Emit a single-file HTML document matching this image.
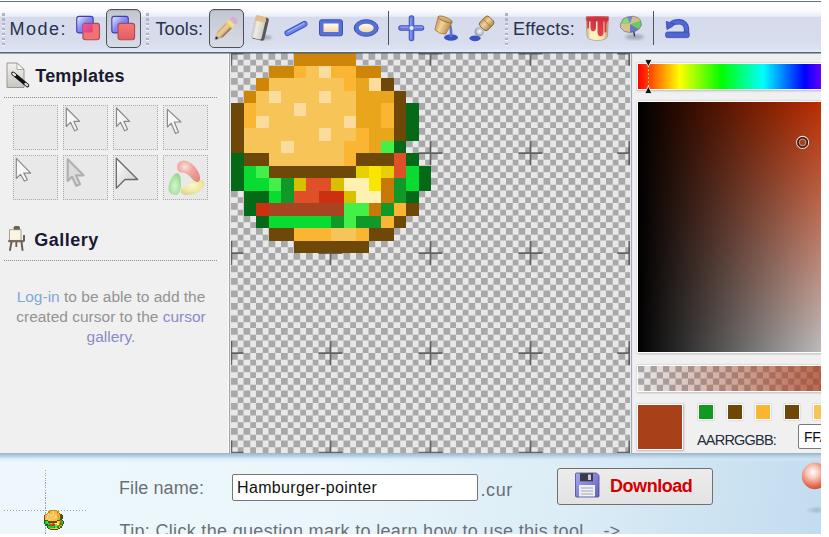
<!DOCTYPE html>
<html><head><meta charset="utf-8">
<style>
html,body{margin:0;padding:0;background:#fff;width:829px;height:537px;overflow:hidden}
body{position:relative;font-family:"Liberation Sans",sans-serif}
.a{position:absolute}
#clip{position:absolute;left:0;top:0;width:821px;height:534px;overflow:hidden;background:#fff}
#tb{left:0;top:1px;width:821px;height:52px;box-sizing:border-box;border-top:1px solid #64747f;border-bottom:1px solid #52667a;
background:linear-gradient(to bottom,#ffffff 0px,#fcfcfe 8px,#eff1f8 13px,#e6e9f4 14.5px,#d5daec 15px,#d8ddee 40px,#dde2f1 47px,#e8edf7 50px)}
.grip{width:3px;height:35px;background:repeating-linear-gradient(to bottom,#b0b4c0 0,#b0b4c0 2.5px,rgba(255,255,255,.8) 2.5px,rgba(255,255,255,.8) 3px,transparent 3px,transparent 5px)}
.lbl{font-size:18px;line-height:18px;color:#28324c;white-space:nowrap}
.btn{box-sizing:border-box;border:1.3px solid #4e5258;border-radius:5px;background:linear-gradient(#c2c6d0,#d8dce6);box-shadow:inset 0 1px 1px rgba(0,0,0,.1)}
.sep{width:1px;background:#4c5560}
#lp{left:0;top:53px;width:228px;height:400px;background:#f0f0f0}
.h{font-size:18px;font-weight:bold;line-height:18px;color:#1a1a33}
.dots{height:1px;background:repeating-linear-gradient(to right,#8c8c8c 0,#8c8c8c 1px,transparent 1px,transparent 2px)}
.cell{width:45px;height:45px;box-sizing:border-box;background:#e9e9e9;
background-image:repeating-linear-gradient(to right,#a9a9a9 0 1px,transparent 1px 2px),repeating-linear-gradient(to right,#a9a9a9 0 1px,transparent 1px 2px),repeating-linear-gradient(to bottom,#a9a9a9 0 1px,transparent 1px 2px),repeating-linear-gradient(to bottom,#a9a9a9 0 1px,transparent 1px 2px);
background-size:100% 1px,100% 1px,1px 100%,1px 100%;background-position:0 0,0 100%,0 0,100% 0;background-repeat:no-repeat}
.chk{background-color:#e7e7e7;background-image:conic-gradient(#e7e7e7 25%,#a8a8a8 0 50%,#e7e7e7 0 75%,#a8a8a8 0);background-size:12.5px 12.5px}
#rp{left:633px;top:53px;width:200px;height:400px;background:#f0f0f0}
#bp{left:0;top:453px;width:821px;height:81px;
background:linear-gradient(to bottom,#9ab2c4 0px,#a8c2d6 1.5px,#bcd4e6 3.5px,rgba(210,232,246,.5) 6px,rgba(220,238,248,0) 10px),linear-gradient(100deg,#eef8fc 0%,#eaf6fb 40%,#dcedf6 68%,#c2dcef 100%)}
</style></head><body>
<div id="clip">
<!-- TOOLBAR -->
<div id="tb" class="a">
</div>
<div class="a grip" style="left:2px;top:13px"></div>
<div class="a lbl" style="left:9.6px;top:19.8px;letter-spacing:1.5px">Mode:</div>
<!-- mode icon 1 -->
<svg class="a" style="left:72px;top:12px" width="32" height="32" viewBox="0 0 32 32">
 <defs>
  <linearGradient id="gb" x1="0" y1="0" x2="1" y2="1"><stop offset="0" stop-color="#eef0ff"/><stop offset=".45" stop-color="#8a8ef4"/><stop offset="1" stop-color="#5a5ce6"/></linearGradient>
  <linearGradient id="gr2" x1="0" y1="0" x2="0" y2="1"><stop offset="0" stop-color="#f27a7a"/><stop offset="1" stop-color="#e65c5c"/></linearGradient>
  <linearGradient id="gm" x1="0" y1="0" x2="1" y2="1"><stop offset="0" stop-color="#e85a9a"/><stop offset="1" stop-color="#e0407e"/></linearGradient>
 </defs>
 <rect x="4.7" y="4.4" width="16.5" height="16.5" rx="2.5" fill="url(#gb)" stroke="#3e40a8" stroke-width="1.1"/>
 <rect x="10.9" y="11.4" width="16.6" height="16.3" rx="2.5" fill="#f07272" stroke="#a84c5a" stroke-width="1.1"/>
 <rect x="11.4" y="11.9" width="9.3" height="8.5" rx="1.2" fill="url(#gm)"/>
</svg>
<div class="a btn" style="left:106px;top:9px;width:35px;height:39px"></div>
<svg class="a" style="left:107px;top:12px" width="32" height="32" viewBox="0 0 32 32">
 <rect x="4.8" y="4.4" width="16.5" height="16.5" rx="2.5" fill="url(#gb)" stroke="#3e40a8" stroke-width="1.1"/>
 <rect x="11" y="11.4" width="16.6" height="16.3" rx="2.5" fill="url(#gr2)" stroke="#a84c5a" stroke-width="1.1"/>
</svg>
<div class="a grip" style="left:146px;top:13px"></div>
<div class="a lbl" style="left:155.5px;top:19.8px;letter-spacing:.1px">Tools:</div>
<div class="a btn" style="left:209px;top:9px;width:35px;height:39px"></div>
<!-- pencil -->
<svg class="a" style="left:210px;top:12px" width="32" height="32" viewBox="0 0 32 32">
 <defs><linearGradient id="gpen" x1="0" y1="0" x2="0" y2="1"><stop offset="0" stop-color="#c8a070"/><stop offset=".35" stop-color="#f0d0a0"/><stop offset=".75" stop-color="#d8b080"/><stop offset="1" stop-color="#6a5030"/></linearGradient>
 <linearGradient id="gpy" x1="0" y1="0" x2="1" y2="0"><stop offset="0" stop-color="#e0cc80"/><stop offset=".5" stop-color="#f2ee60"/><stop offset="1" stop-color="#e4d8a0"/></linearGradient>
 <filter id="pbl"><feGaussianBlur stdDeviation=".35"/></filter></defs>
 <g transform="translate(5 27.6) rotate(-45.5)" filter="url(#pbl)">
  <path d="M0 0 L7.5 -3.9 H21 V3.9 H7.5 Z" fill="url(#gpen)"/>
  <path d="M0 0 L3.3 -1.7 V1.7 Z" fill="#111"/>
  <path d="M19.5 -3.9 H25 V3.9 H19.5 Z" fill="url(#gpy)"/>
  <path d="M24.5 -3.9 H27.5 Q30 -3.5 30 0 Q30 3.5 27.5 3.9 H24.5 Z" fill="#dcaad8"/>
 </g>
</svg>
<!-- eraser -->
<svg class="a" style="left:246px;top:12px" width="32" height="32" viewBox="0 0 32 32">
 <defs><linearGradient id="ge" x1="0" y1="0" x2="1" y2="0"><stop offset="0" stop-color="#c8c6c0"/><stop offset=".3" stop-color="#eeece6"/><stop offset="1" stop-color="#d0cec8"/></linearGradient>
 <filter id="esh"><feGaussianBlur stdDeviation="1.2"/></filter></defs>
 <ellipse cx="20" cy="25.5" rx="6" ry="2.2" fill="#556" opacity=".35" filter="url(#esh)"/>
 <g transform="rotate(13 13 16)">
  <rect x="7.8" y="4.2" width="13" height="23.5" rx="2.2" fill="#585858"/>
  <rect x="7.3" y="4" width="10.5" height="23" rx="1.8" fill="url(#ge)"/>
  <path d="M9.1 4 H16 Q17.8 4 17.8 5.8 V9.5 H7.3 V5.8 Q7.3 4 9.1 4 Z" fill="#e4bc88"/>
 </g>
</svg>
<!-- line -->
<svg class="a" style="left:280px;top:12px" width="32" height="32" viewBox="0 0 32 32">
 <line x1="7.5" y1="21" x2="24.5" y2="12" stroke="#3f55b8" stroke-width="6" stroke-linecap="round"/>
 <line x1="7.5" y1="21" x2="24.5" y2="12" stroke="#6a86ee" stroke-width="4" stroke-linecap="round"/>
 <line x1="8" y1="19.8" x2="24" y2="11.3" stroke="#9db2ff" stroke-width="1.2" stroke-linecap="round"/>
</svg>
<!-- rect -->
<svg class="a" style="left:315px;top:12px" width="32" height="32" viewBox="0 0 32 32">
 <defs><linearGradient id="gc" x1="0" y1="0" x2="0" y2="1"><stop offset="0" stop-color="#fffaf0"/><stop offset="1" stop-color="#f0d8a8"/></linearGradient></defs>
 <rect x="4.5" y="7.8" width="23" height="16" rx="2" fill="#5670d8" stroke="#3c50b0" stroke-width="1"/>
 <rect x="8.5" y="11.5" width="15" height="8.5" fill="url(#gc)"/>
</svg>
<!-- ellipse -->
<svg class="a" style="left:350px;top:12px" width="32" height="32" viewBox="0 0 32 32">
 <ellipse cx="16.2" cy="16" rx="12" ry="8.3" fill="#5670d8" stroke="#3c50b0" stroke-width="1"/>
 <ellipse cx="16.2" cy="16" rx="7.5" ry="4.2" fill="url(#gc)"/>
</svg>
<div class="a sep" style="left:388px;top:11px;height:34px"></div>
<!-- move cross -->
<svg class="a" style="left:396px;top:12px" width="32" height="32" viewBox="0 0 32 32">
 <g stroke="#3c50b0" stroke-width="5.5" stroke-linecap="round"><line x1="5" y1="16" x2="25.5" y2="16"/><line x1="15.5" y1="6" x2="15.5" y2="26.5"/></g>
 <g stroke="#6078e0" stroke-width="3.8" stroke-linecap="round"><line x1="5" y1="16" x2="25.5" y2="16"/><line x1="15.5" y1="6" x2="15.5" y2="26.5"/></g>
 <g stroke="#98acf8" stroke-width="1" stroke-linecap="round"><line x1="5" y1="15.2" x2="12" y2="15.2"/><line x1="19" y1="15.2" x2="27" y2="15.2"/><line x1="14.8" y1="6" x2="14.8" y2="13"/><line x1="14.8" y1="19" x2="14.8" y2="27"/></g>
 <circle cx="15.5" cy="16" r="2" fill="#e8ecff"/>
</svg>
<!-- bucket -->
<svg class="a" style="left:430px;top:12px" width="32" height="32" viewBox="0 0 32 32">
 <defs><linearGradient id="gk" x1="0" y1="0" x2="1" y2="0"><stop offset="0" stop-color="#c89a58"/><stop offset=".4" stop-color="#f2d49a"/><stop offset="1" stop-color="#b88a48"/></linearGradient>
 <linearGradient id="gk2" x1="0" y1="0" x2="1" y2="1"><stop offset="0" stop-color="#e8c888"/><stop offset="1" stop-color="#c09050"/></linearGradient></defs>
 <ellipse cx="21" cy="25.5" rx="7" ry="3.3" fill="#3c54c0"/>
 <path d="M19.5 12 Q21.5 16 21 25" stroke="#5a74d0" stroke-width="2.6" fill="none"/>
 <g transform="rotate(22 13 13)">
  <path d="M5.5 7 L20.5 7 L18.8 20.5 Q13 23 7.2 20.5 Z" fill="url(#gk)" stroke="#9a7440" stroke-width=".7"/>
  <ellipse cx="13" cy="7" rx="7.5" ry="2.2" fill="url(#gk2)" stroke="#8a6430" stroke-width=".7"/>
 </g>
</svg>
<!-- dropper -->
<svg class="a" style="left:464px;top:12px" width="32" height="32" viewBox="0 0 32 32">
 <defs><radialGradient id="gs" cx=".55" cy=".45" r=".7"><stop offset="0" stop-color="#ffffff"/><stop offset=".45" stop-color="#c0c4d0"/><stop offset="1" stop-color="#6a7080"/></radialGradient></defs>
 <ellipse cx="11" cy="26.3" rx="5.6" ry="2.9" fill="#3c54c0"/>
 <circle cx="15.2" cy="19.8" r="4.6" fill="url(#gs)"/>
 <g transform="rotate(45 23 11)"><rect x="17.5" y="5" width="11" height="13" rx="3" fill="url(#gk)" stroke="#7a5a30" stroke-width=".8"/>
 <line x1="17.8" y1="11" x2="28.2" y2="11" stroke="#8a6a40" stroke-width="1" opacity=".6"/></g>
</svg>
<div class="a grip" style="left:505px;top:13px"></div>
<div class="a lbl" style="left:513px;top:19.8px;letter-spacing:.3px">Effects:</div>
<!-- drip cup -->
<svg class="a" style="left:581px;top:12px" width="32" height="32" viewBox="0 0 32 32">
 <defs><linearGradient id="gy" x1="0" y1="0" x2="1" y2="0"><stop offset="0" stop-color="#c8b088"/><stop offset=".2" stop-color="#fff2c0"/><stop offset=".7" stop-color="#fff0b8"/><stop offset="1" stop-color="#b8a078"/></linearGradient>
 <linearGradient id="gd" x1="0" y1="0" x2="0" y2="1"><stop offset="0" stop-color="#c83040"/><stop offset="1" stop-color="#e84050"/></linearGradient></defs>
 <path d="M5.2 5 H27.5 L26.5 24 Q26 28.3 16.3 28.5 Q6.5 28.3 6 24 Z" fill="url(#gy)" stroke="#a89878" stroke-width=".7"/>
 <path d="M5.2 4.5 Q16 3.5 27.5 4.5 V8.5 Q26 9 25.5 12 V20 Q24.5 21 23.5 20 V9.5 H22.5 V21 Q22 24.5 19.5 24.3 Q16.5 24 16.5 20 V9.5 H15 V16 Q14.5 19.5 12 19.3 Q9.5 19 9.5 15.5 V9.5 H8 V16 Q7 17 6.2 16 V9 Q5.2 8.5 5.2 8 Z" fill="url(#gd)"/>
 <path d="M5.5 5 Q16 4 27.2 5" stroke="#f08080" stroke-width="1" fill="none" opacity=".6"/>
</svg>
<!-- umbrella -->
<svg class="a" style="left:615px;top:12px" width="32" height="32" viewBox="0 0 32 32">
 <defs><filter id="ush"><feGaussianBlur stdDeviation="1.5"/></filter></defs>
 <ellipse cx="19.5" cy="25" rx="9.5" ry="2.8" fill="#404860" opacity=".35" filter="url(#ush)"/>
 <line x1="18.6" y1="18.5" x2="19.6" y2="24.3" stroke="#3a3a3a" stroke-width="1.4"/>
<g stroke="none">
  <path d="M15 12 L5.5 12 L8 7 L12 5 Z" fill="#88d878"/>
  <path d="M15 12 L12 5 L18 4.2 Z" fill="#7a88c8"/>
  <path d="M15 12 L18 4.2 L23 5.5 L25.5 8.5 Z" fill="#d4bc8a"/>
  <path d="M15 12 L25.5 8.5 L26.5 13 L24 17 Z" fill="#6ccc5c"/>
  <path d="M15 12 L24 17 L19.5 19.8 L15 20.5 Z" fill="#6a78c0"/>
  <path d="M15 12 L15 20.5 L9.5 19.5 L5.5 15.5 L5.5 12 Z" fill="#dcc28a"/>
 </g>
 <path d="M5.5 12 L8 7 L12 5 L18 4.2 L23 5.5 L25.5 8.5 L26.5 13 L24 17 L19.5 19.8 L15 20.5 L9.5 19.5 L5.5 15.5 Z" fill="none" stroke="#5a5a60" stroke-width=".7" stroke-linejoin="round" opacity=".8"/>
</svg>
<div class="a sep" style="left:653px;top:11px;height:34px"></div>
<!-- undo -->
<svg class="a" style="left:661px;top:12px" width="32" height="32" viewBox="0 0 32 32">
 <path d="M10.5 11.5 Q13.5 9.8 18.5 9.8 A7 7 0 0 1 25.5 16.8 V22" stroke="#3848b0" stroke-width="5.4" fill="none"/>
 <path d="M10.5 11.5 Q13.5 9.8 18.5 9.8 A7 7 0 0 1 25.5 16.8 V22" stroke="#5068d8" stroke-width="3.8" fill="none"/>
 <path d="M5.2 9.5 L13.5 11.8 L11.5 14.5 L6 17.5 Z" fill="#4a60d0" stroke="#3848b0" stroke-width=".8" stroke-linejoin="round"/>
 <rect x="4.6" y="20" width="23.6" height="5.6" rx="1.8" fill="#4e66d4" stroke="#3848b0" stroke-width=".8"/>
</svg>
<!-- LEFT PANEL -->
<div id="lp" class="a"></div>
<div class="a" style="left:228px;top:53px;width:1px;height:400px;background:#fbfbfb"></div>
<div class="a" style="left:229px;top:53px;width:1px;height:400px;background:#9ea7ae"></div>
<div class="a" style="left:230px;top:53px;width:1px;height:400px;background:#e1e5e8"></div>
<!-- templates icon -->
<svg class="a" style="left:4px;top:60px" width="28" height="30" viewBox="0 0 28 30">
 <defs><linearGradient id="gp" x1="0" y1="0" x2="0" y2="1"><stop offset="0" stop-color="#f4f2ee"/><stop offset="1" stop-color="#c8c6c0"/></linearGradient></defs>
 <path d="M3 3 H13 L20 9.5 V27.5 H3 Z" fill="url(#gp)" stroke="#8e8e8e" stroke-width=".9"/>
 <path d="M13 3 V9.5 H20 Z" fill="#fafafa" stroke="#8e8e8e" stroke-width=".7"/>
 <line x1="9" y1="13.5" x2="23.5" y2="25.5" stroke="#111" stroke-width="3.6" stroke-linecap="round"/>
 <line x1="9.2" y1="13.6" x2="11" y2="15.1" stroke="#eee" stroke-width="2.2" stroke-linecap="round"/>
 <line x1="21.5" y1="23.8" x2="23.3" y2="25.3" stroke="#ddd" stroke-width="2.2" stroke-linecap="round"/>
</svg>
<div class="a h" style="left:35.3px;top:66.5px;letter-spacing:.2px">Templates</div>
<div class="a dots" style="left:4px;top:97px;width:213px"></div>
<div class="a cell" style="left:13px;top:105px"></div>
<div class="a cell" style="left:63px;top:105px"></div>
<div class="a cell" style="left:113px;top:105px"></div>
<div class="a cell" style="left:163px;top:105px"></div>
<div class="a cell" style="left:13px;top:155px"></div>
<div class="a cell" style="left:63px;top:155px"></div>
<div class="a cell" style="left:113px;top:155px"></div>
<div class="a cell" style="left:163px;top:155px"></div>
<!-- cursors -->
<svg class="a" style="left:0;top:100px" width="228" height="100" viewBox="0 0 228 100">
 <defs><filter id="bl"><feGaussianBlur stdDeviation=".6"/></filter><filter id="bl2"><feGaussianBlur stdDeviation=".7"/></filter>
 <linearGradient id="gt" x1="0" y1="0" x2="1" y2="1"><stop offset="0" stop-color="#ffffff"/><stop offset="1" stop-color="#c8c8c8"/></linearGradient></defs>
 <g fill="#f6f6f6" stroke="#8a8a8a" stroke-width="1.2" stroke-linejoin="round">
  <path d="M66.3 8 V26.5 L70.5 22.3 L74.6 30.8 L77.6 29.5 L73.8 21.3 H79.6 Z"/>
  <path d="M116.5 8 V26.5 L120.5 22.3 L124.6 30.8 L127.6 29.5 L123.8 21.3 H129.6 Z"/>
  <path d="M167.4 9.4 V27 L171.2 23.2 L175.5 33.5 L178.5 32.2 L174.3 22 H181 Z"/>
  <path d="M16.3 58.3 V78.5 L20.5 74.3 L24.3 81 L27.4 79.7 L23.8 73.1 H30.7 Z"/>
 </g>
 <path d="M67.7 59.2 V81 L72 76.8 L76.3 85.8 L80 84.3 L76 75.3 H83.6 Z" fill="#dcdcdc" stroke="#b0b0b0" stroke-width="2.2" stroke-linejoin="round" filter="url(#bl)"/>
 <path d="M116.3 58.3 V88.2 L125 79.5 H137.7 Z" fill="url(#gt)" stroke="#6a6a6a" stroke-width="1.3" stroke-linejoin="round"/>
 <defs>
  <radialGradient id="brd" cx=".35" cy=".3" r=".8"><stop offset="0" stop-color="#fde0d8"/><stop offset=".4" stop-color="#f0a8a0"/><stop offset="1" stop-color="#e08c84"/></radialGradient>
  <radialGradient id="bgr" cx=".5" cy=".6" r=".7"><stop offset="0" stop-color="#d8f4d0"/><stop offset=".5" stop-color="#b0e4a8"/><stop offset="1" stop-color="#90cc88"/></radialGradient>
  <radialGradient id="byl" cx=".5" cy=".4" r=".7"><stop offset="0" stop-color="#fbf8d0"/><stop offset=".6" stop-color="#eee6a0"/><stop offset="1" stop-color="#d8cc80"/></radialGradient>
 </defs>
 <g filter="url(#bl2)">
  <path d="M178 73 Q181.5 76 181 84 Q181 92 177 95 Q170 95.5 168.5 90 Q168 82 173 76 Q175 73 178 73 Z" fill="url(#bgr)"/>
  <path d="M181 90 Q186 84 194 81 Q201.5 78 204 82 Q205.5 88 198 92.5 Q190 95.5 184 94.5 Q180 93 181 90 Z" fill="url(#byl)"/>
  <path d="M177 67 Q177.5 60.5 184 60.5 Q192 61.5 198 71 Q202 79.5 198.5 82 Q194.5 82.5 190.5 77 Q186.5 72.5 181 72.5 Q177 71.5 177 67 Z" fill="url(#brd)"/>
 </g>
</svg>
<!-- gallery icon -->
<svg class="a" style="left:4px;top:222px" width="26" height="32" viewBox="0 0 26 32">
 <rect x="9.6" y="3.9" width="6.3" height="4.5" rx="1.5" fill="#6a6250"/>
 <rect x="5.5" y="7.8" width="11.5" height="10.5" fill="#fcf4e2" stroke="#8a8070" stroke-width=".7"/>
 <rect x="4" y="18" width="16.7" height="2.3" rx="1" fill="#786e5e"/>
 <path d="M7.5 20 L6 28" stroke="#676050" stroke-width="2" stroke-linecap="round"/>
 <path d="M17.5 20 L18.5 28" stroke="#676050" stroke-width="2" stroke-linecap="round"/>
 <path d="M12.3 20 V25" stroke="#676050" stroke-width="1.8"/>
 <rect x="19" y="13" width="2" height="6" fill="#6a6250"/>
</svg>
<div class="a h" style="left:34.2px;top:230.8px;letter-spacing:.5px">Gallery</div>
<div class="a dots" style="left:4px;top:260px;width:213px"></div>
<div class="a" style="left:-3px;top:287px;width:228px;text-align:center;font-size:15.5px;line-height:19.85px;color:#939393">
<span style="color:#80a8da">Log-in</span> to be able to add the<br>created cursor to the <span style="color:#8a8acc">cursor</span><br><span style="color:#8a8acc">gallery</span>.</div>

<!-- CANVAS -->
<svg class="a" style="left:231px;top:53px" width="400" height="400" viewBox="0 0 64 64" shape-rendering="crispEdges"><defs><pattern id="pc" width="2" height="2" patternUnits="userSpaceOnUse"><rect width="2" height="2" fill="#e8e8e8"/><rect width="1" height="1" fill="#a8a8a8"/><rect x="1" y="1" width="1" height="1" fill="#a8a8a8"/></pattern></defs><rect width="64" height="64" fill="url(#pc)"/></svg>
<svg class="a" style="left:231px;top:53px" width="400" height="400" viewBox="0 0 400 400">
 <path d="M-11.6 0.7H12.4M0.4 -11.3V12.7M-11.6 100.1H12.4M0.4 88.1V112.1M-11.6 200.1H12.4M0.4 188.1V212.1M-11.6 300.1H12.4M0.4 288.1V312.1M-11.6 399.5H12.4M0.4 387.5V411.5M87.5 0.7H111.5M99.5 -11.3V12.7M87.5 100.1H111.5M99.5 88.1V112.1M87.5 200.1H111.5M99.5 188.1V212.1M87.5 300.1H111.5M99.5 288.1V312.1M87.5 399.5H111.5M99.5 387.5V411.5M187.5 0.7H211.5M199.5 -11.3V12.7M187.5 100.1H211.5M199.5 88.1V112.1M187.5 200.1H211.5M199.5 188.1V212.1M187.5 300.1H211.5M199.5 288.1V312.1M187.5 399.5H211.5M199.5 387.5V411.5M287.5 0.7H311.5M299.5 -11.3V12.7M287.5 100.1H311.5M299.5 88.1V112.1M287.5 200.1H311.5M299.5 188.1V212.1M287.5 300.1H311.5M299.5 288.1V312.1M287.5 399.5H311.5M299.5 387.5V411.5M386.2 0.7H410.2M398.2 -11.3V12.7M386.2 100.1H410.2M398.2 88.1V112.1M386.2 200.1H410.2M398.2 188.1V212.1M386.2 300.1H410.2M398.2 288.1V312.1M386.2 399.5H410.2M398.2 387.5V411.5" stroke="#505050" stroke-width="1.7" fill="none" opacity=".85"/>
</svg>
<svg class="a" style="left:231px;top:53px" width="400" height="400" viewBox="0 0 32 32" shape-rendering="crispEdges"><rect x="5" y="0" width="5" height="1" fill="#cd8608"/><rect x="3" y="1" width="2" height="1" fill="#cd8608"/><rect x="5" y="1" width="1" height="1" fill="#fab632"/><rect x="6" y="1" width="1" height="1" fill="#f7c458"/><rect x="7" y="1" width="1" height="1" fill="#fcdc9c"/><rect x="8" y="1" width="2" height="1" fill="#fab632"/><rect x="10" y="1" width="2" height="1" fill="#cd8608"/><rect x="2" y="2" width="1" height="1" fill="#cd8608"/><rect x="3" y="2" width="6" height="1" fill="#f7c458"/><rect x="9" y="2" width="1" height="1" fill="#fab632"/><rect x="10" y="2" width="1" height="1" fill="#e9a51c"/><rect x="11" y="2" width="1" height="1" fill="#fcdc9c"/><rect x="12" y="2" width="1" height="1" fill="#6e4808"/><rect x="1" y="3" width="1" height="1" fill="#cd8608"/><rect x="2" y="3" width="1" height="1" fill="#f7c458"/><rect x="3" y="3" width="1" height="1" fill="#fcdc9c"/><rect x="4" y="3" width="3" height="1" fill="#f7c458"/><rect x="7" y="3" width="1" height="1" fill="#fcdc9c"/><rect x="8" y="3" width="2" height="1" fill="#f7c458"/><rect x="10" y="3" width="3" height="1" fill="#e9a51c"/><rect x="13" y="3" width="1" height="1" fill="#6e4808"/><rect x="0" y="4" width="1" height="1" fill="#6e4808"/><rect x="1" y="4" width="1" height="1" fill="#fab632"/><rect x="2" y="4" width="3" height="1" fill="#f7c458"/><rect x="5" y="4" width="1" height="1" fill="#fcdc9c"/><rect x="6" y="4" width="4" height="1" fill="#f7c458"/><rect x="10" y="4" width="2" height="1" fill="#e9a51c"/><rect x="12" y="4" width="1" height="1" fill="#fab632"/><rect x="13" y="4" width="1" height="1" fill="#6e4808"/><rect x="14" y="4" width="1" height="1" fill="#056a18"/><rect x="0" y="5" width="1" height="1" fill="#6e4808"/><rect x="1" y="5" width="1" height="1" fill="#fab632"/><rect x="2" y="5" width="1" height="1" fill="#fcdc9c"/><rect x="3" y="5" width="6" height="1" fill="#f7c458"/><rect x="9" y="5" width="1" height="1" fill="#fcdc9c"/><rect x="10" y="5" width="2" height="1" fill="#e9a51c"/><rect x="12" y="5" width="1" height="1" fill="#fab632"/><rect x="13" y="5" width="1" height="1" fill="#6e4808"/><rect x="14" y="5" width="1" height="1" fill="#056a18"/><rect x="0" y="6" width="1" height="1" fill="#6e4808"/><rect x="1" y="6" width="6" height="1" fill="#f7c458"/><rect x="7" y="6" width="1" height="1" fill="#fcdc9c"/><rect x="8" y="6" width="2" height="1" fill="#f7c458"/><rect x="10" y="6" width="1" height="1" fill="#fab632"/><rect x="11" y="6" width="2" height="1" fill="#e9a51c"/><rect x="13" y="6" width="1" height="1" fill="#6e4808"/><rect x="14" y="6" width="1" height="1" fill="#056a18"/><rect x="0" y="7" width="1" height="1" fill="#6e4808"/><rect x="1" y="7" width="3" height="1" fill="#f7c458"/><rect x="4" y="7" width="1" height="1" fill="#fcdc9c"/><rect x="5" y="7" width="4" height="1" fill="#f7c458"/><rect x="9" y="7" width="2" height="1" fill="#fab632"/><rect x="11" y="7" width="1" height="1" fill="#e9a51c"/><rect x="12" y="7" width="1" height="1" fill="#42f048"/><rect x="13" y="7" width="1" height="1" fill="#056a18"/><rect x="0" y="8" width="1" height="1" fill="#056a18"/><rect x="1" y="8" width="2" height="1" fill="#6e4808"/><rect x="3" y="8" width="6" height="1" fill="#f7c458"/><rect x="9" y="8" width="1" height="1" fill="#fab632"/><rect x="10" y="8" width="3" height="1" fill="#6e4808"/><rect x="13" y="8" width="1" height="1" fill="#e05028"/><rect x="14" y="8" width="1" height="1" fill="#056a18"/><rect x="0" y="9" width="1" height="1" fill="#056a18"/><rect x="1" y="9" width="1" height="1" fill="#08dc30"/><rect x="2" y="9" width="1" height="1" fill="#42f048"/><rect x="3" y="9" width="7" height="1" fill="#6e4808"/><rect x="10" y="9" width="1" height="1" fill="#e8d000"/><rect x="11" y="9" width="1" height="1" fill="#f8e600"/><rect x="12" y="9" width="1" height="1" fill="#e8d000"/><rect x="13" y="9" width="1" height="1" fill="#e05028"/><rect x="14" y="9" width="1" height="1" fill="#08dc30"/><rect x="15" y="9" width="1" height="1" fill="#056a18"/><rect x="0" y="10" width="1" height="1" fill="#056a18"/><rect x="1" y="10" width="2" height="1" fill="#08dc30"/><rect x="3" y="10" width="1" height="1" fill="#42f048"/><rect x="4" y="10" width="1" height="1" fill="#109828"/><rect x="5" y="10" width="1" height="1" fill="#d8c000"/><rect x="6" y="10" width="2" height="1" fill="#e05028"/><rect x="8" y="10" width="1" height="1" fill="#d8c000"/><rect x="9" y="10" width="2" height="1" fill="#fff2b0"/><rect x="11" y="10" width="1" height="1" fill="#f8e600"/><rect x="12" y="10" width="1" height="1" fill="#c87808"/><rect x="13" y="10" width="1" height="1" fill="#109828"/><rect x="14" y="10" width="1" height="1" fill="#08dc30"/><rect x="15" y="10" width="1" height="1" fill="#056a18"/><rect x="1" y="11" width="2" height="1" fill="#056a18"/><rect x="3" y="11" width="1" height="1" fill="#08dc30"/><rect x="4" y="11" width="1" height="1" fill="#109828"/><rect x="5" y="11" width="2" height="1" fill="#e05028"/><rect x="7" y="11" width="2" height="1" fill="#cc3010"/><rect x="9" y="11" width="1" height="1" fill="#d8c000"/><rect x="10" y="11" width="2" height="1" fill="#fff2b0"/><rect x="12" y="11" width="1" height="1" fill="#c87808"/><rect x="13" y="11" width="1" height="1" fill="#109828"/><rect x="14" y="11" width="1" height="1" fill="#056a18"/><rect x="1" y="12" width="1" height="1" fill="#056a18"/><rect x="2" y="12" width="1" height="1" fill="#cc3010"/><rect x="3" y="12" width="6" height="1" fill="#a84420"/><rect x="9" y="12" width="2" height="1" fill="#42f048"/><rect x="11" y="12" width="1" height="1" fill="#c87808"/><rect x="12" y="12" width="1" height="1" fill="#109828"/><rect x="13" y="12" width="1" height="1" fill="#fab632"/><rect x="14" y="12" width="1" height="1" fill="#6e4808"/><rect x="2" y="13" width="1" height="1" fill="#056a18"/><rect x="3" y="13" width="5" height="1" fill="#08dc30"/><rect x="8" y="13" width="1" height="1" fill="#109828"/><rect x="9" y="13" width="1" height="1" fill="#42f048"/><rect x="10" y="13" width="2" height="1" fill="#109828"/><rect x="12" y="13" width="1" height="1" fill="#fab632"/><rect x="13" y="13" width="1" height="1" fill="#6e4808"/><rect x="3" y="14" width="2" height="1" fill="#6e4808"/><rect x="5" y="14" width="3" height="1" fill="#fab632"/><rect x="8" y="14" width="2" height="1" fill="#f7c458"/><rect x="10" y="14" width="1" height="1" fill="#fab632"/><rect x="11" y="14" width="2" height="1" fill="#6e4808"/><rect x="5" y="15" width="6" height="1" fill="#6e4808"/></svg>
<div class="a" style="left:630px;top:53px;width:1px;height:400px;background:#e6eaec"></div>
<div class="a" style="left:631px;top:53px;width:1px;height:400px;background:#a4acb4"></div>
<div class="a" style="left:632px;top:53px;width:1px;height:400px;background:#e8ebee"></div>

<!-- RIGHT PANEL -->
<div id="rp" class="a"></div>
<div class="a" style="left:638px;top:64px;width:250px;height:25px;box-shadow:0 0 0 1px #fff,0 0 2px 1.5px rgba(0,0,0,.22);
background:linear-gradient(to right,#f00 0%,#ff0 16.667%,#0f0 33.333%,#0ff 50%,#00f 66.667%,#f0f 83.333%,#f00 100%)"></div>
<svg class="a" style="left:640px;top:57px" width="18" height="40" viewBox="0 0 18 40">
 <path d="M8.5 9 V29" stroke="#fff" stroke-width="1" stroke-dasharray="1.2 2.6" opacity=".85"/>
 <path d="M4.8 2.6 H11.9 L8.4 9.7 Z" fill="#111" stroke="#fff" stroke-width=".8" stroke-linejoin="round"/>
 <path d="M4.8 36.6 H11.9 L8.4 29 Z" fill="#111" stroke="#fff" stroke-width=".8" stroke-linejoin="round"/>
</svg>
<div class="a" style="left:638px;top:102px;width:250px;height:250px;box-shadow:0 0 0 1px #fff,0 0 2px 1.5px rgba(0,0,0,.22);
background:linear-gradient(to right,#000,rgba(0,0,0,0)),linear-gradient(to bottom,#ff3d00,#fff)"></div>
<svg class="a" style="left:794px;top:134px" width="16" height="16" viewBox="0 0 16 16">
 <circle cx="8.6" cy="8.4" r="6" fill="none" stroke="#f4dcd0" stroke-width="1.1"/>
 <circle cx="8.6" cy="8.4" r="4.7" fill="none" stroke="#202020" stroke-width="1.5"/>
 <circle cx="8.6" cy="8.4" r="3.3" fill="none" stroke="#c89890" stroke-width="1"/>
</svg>
<div class="a" style="left:638px;top:366px;width:250px;height:25px;box-shadow:0 0 0 1px #fff,0 0 2px 1.5px rgba(0,0,0,.22)"></div>
<svg class="a" style="left:638px;top:366px" width="250" height="25"><rect width="250" height="25" fill="#e8e8e8"/><g fill="#a8a8a8"><rect x="0" y="0" width="6.25" height="6.25"/><rect x="12.5" y="0" width="6.25" height="6.25"/><rect x="25" y="0" width="6.25" height="6.25"/><rect x="37.5" y="0" width="6.25" height="6.25"/><rect x="50" y="0" width="6.25" height="6.25"/><rect x="62.5" y="0" width="6.25" height="6.25"/><rect x="75" y="0" width="6.25" height="6.25"/><rect x="87.5" y="0" width="6.25" height="6.25"/><rect x="100" y="0" width="6.25" height="6.25"/><rect x="112.5" y="0" width="6.25" height="6.25"/><rect x="125" y="0" width="6.25" height="6.25"/><rect x="137.5" y="0" width="6.25" height="6.25"/><rect x="150" y="0" width="6.25" height="6.25"/><rect x="162.5" y="0" width="6.25" height="6.25"/><rect x="175" y="0" width="6.25" height="6.25"/><rect x="187.5" y="0" width="6.25" height="6.25"/><rect x="200" y="0" width="6.25" height="6.25"/><rect x="212.5" y="0" width="6.25" height="6.25"/><rect x="225" y="0" width="6.25" height="6.25"/><rect x="237.5" y="0" width="6.25" height="6.25"/><rect x="6.25" y="6.25" width="6.25" height="6.25"/><rect x="18.75" y="6.25" width="6.25" height="6.25"/><rect x="31.25" y="6.25" width="6.25" height="6.25"/><rect x="43.75" y="6.25" width="6.25" height="6.25"/><rect x="56.25" y="6.25" width="6.25" height="6.25"/><rect x="68.75" y="6.25" width="6.25" height="6.25"/><rect x="81.25" y="6.25" width="6.25" height="6.25"/><rect x="93.75" y="6.25" width="6.25" height="6.25"/><rect x="106.25" y="6.25" width="6.25" height="6.25"/><rect x="118.75" y="6.25" width="6.25" height="6.25"/><rect x="131.25" y="6.25" width="6.25" height="6.25"/><rect x="143.75" y="6.25" width="6.25" height="6.25"/><rect x="156.25" y="6.25" width="6.25" height="6.25"/><rect x="168.75" y="6.25" width="6.25" height="6.25"/><rect x="181.25" y="6.25" width="6.25" height="6.25"/><rect x="193.75" y="6.25" width="6.25" height="6.25"/><rect x="206.25" y="6.25" width="6.25" height="6.25"/><rect x="218.75" y="6.25" width="6.25" height="6.25"/><rect x="231.25" y="6.25" width="6.25" height="6.25"/><rect x="243.75" y="6.25" width="6.25" height="6.25"/><rect x="0" y="12.5" width="6.25" height="6.25"/><rect x="12.5" y="12.5" width="6.25" height="6.25"/><rect x="25" y="12.5" width="6.25" height="6.25"/><rect x="37.5" y="12.5" width="6.25" height="6.25"/><rect x="50" y="12.5" width="6.25" height="6.25"/><rect x="62.5" y="12.5" width="6.25" height="6.25"/><rect x="75" y="12.5" width="6.25" height="6.25"/><rect x="87.5" y="12.5" width="6.25" height="6.25"/><rect x="100" y="12.5" width="6.25" height="6.25"/><rect x="112.5" y="12.5" width="6.25" height="6.25"/><rect x="125" y="12.5" width="6.25" height="6.25"/><rect x="137.5" y="12.5" width="6.25" height="6.25"/><rect x="150" y="12.5" width="6.25" height="6.25"/><rect x="162.5" y="12.5" width="6.25" height="6.25"/><rect x="175" y="12.5" width="6.25" height="6.25"/><rect x="187.5" y="12.5" width="6.25" height="6.25"/><rect x="200" y="12.5" width="6.25" height="6.25"/><rect x="212.5" y="12.5" width="6.25" height="6.25"/><rect x="225" y="12.5" width="6.25" height="6.25"/><rect x="237.5" y="12.5" width="6.25" height="6.25"/><rect x="6.25" y="18.75" width="6.25" height="6.25"/><rect x="18.75" y="18.75" width="6.25" height="6.25"/><rect x="31.25" y="18.75" width="6.25" height="6.25"/><rect x="43.75" y="18.75" width="6.25" height="6.25"/><rect x="56.25" y="18.75" width="6.25" height="6.25"/><rect x="68.75" y="18.75" width="6.25" height="6.25"/><rect x="81.25" y="18.75" width="6.25" height="6.25"/><rect x="93.75" y="18.75" width="6.25" height="6.25"/><rect x="106.25" y="18.75" width="6.25" height="6.25"/><rect x="118.75" y="18.75" width="6.25" height="6.25"/><rect x="131.25" y="18.75" width="6.25" height="6.25"/><rect x="143.75" y="18.75" width="6.25" height="6.25"/><rect x="156.25" y="18.75" width="6.25" height="6.25"/><rect x="168.75" y="18.75" width="6.25" height="6.25"/><rect x="181.25" y="18.75" width="6.25" height="6.25"/><rect x="193.75" y="18.75" width="6.25" height="6.25"/><rect x="206.25" y="18.75" width="6.25" height="6.25"/><rect x="218.75" y="18.75" width="6.25" height="6.25"/><rect x="231.25" y="18.75" width="6.25" height="6.25"/><rect x="243.75" y="18.75" width="6.25" height="6.25"/></g></svg>
<div class="a" style="left:638px;top:366px;width:250px;height:25px;background:linear-gradient(to right,rgba(168,60,26,0),rgba(168,60,26,1))"></div>
<div class="a" style="left:638px;top:405px;width:44px;height:44px;background:#a8401a;box-shadow:0 0 0 1px #fff,0 0 2px 1.5px rgba(0,0,0,.25)"></div>
<div class="a" style="left:698.5px;top:404.5px;width:14px;height:14px;background:#109a20;box-shadow:0 0 0 1px #fff,0 0 2px 1px rgba(0,0,0,.2)"></div>
<div class="a" style="left:727.5px;top:404.5px;width:14px;height:14px;background:#6e4808;box-shadow:0 0 0 1px #fff,0 0 2px 1px rgba(0,0,0,.2)"></div>
<div class="a" style="left:756px;top:404.5px;width:14px;height:14px;background:#fab632;box-shadow:0 0 0 1px #fff,0 0 2px 1px rgba(0,0,0,.2)"></div>
<div class="a" style="left:785px;top:404.5px;width:14px;height:14px;background:#6e4808;box-shadow:0 0 0 1px #fff,0 0 2px 1px rgba(0,0,0,.2)"></div>
<div class="a" style="left:814px;top:404.5px;width:14px;height:14px;background:#f7c458;box-shadow:0 0 0 1px #fff,0 0 2px 1px rgba(0,0,0,.2)"></div>
<div class="a" style="left:697px;top:432px;font-size:14.5px;line-height:16px;color:#262c3c;letter-spacing:-.8px">AARRGGBB:</div>
<div class="a" style="left:798px;top:424px;width:60px;height:25px;box-sizing:border-box;border:1px solid #7a7a7a;border-radius:2px;background:#fff;font-size:14px;line-height:25px;padding-left:5px;letter-spacing:-.3px;color:#111">FFA83C1A</div>

<div class="a" style="left:0;top:53px;width:821px;height:1px;background:rgba(60,80,95,.45)"></div>
<!-- BOTTOM PANEL -->
<div id="bp" class="a"></div>
<div class="a" style="left:45px;top:470px;width:1px;height:64px;background:repeating-linear-gradient(to bottom,#9aa4aa 0 1px,transparent 1px 2.5px)"></div>
<div class="a" style="left:4px;top:510px;width:82px;height:1px;background:repeating-linear-gradient(to right,#9aa4aa 0 1.5px,transparent 1.5px 3px)"></div>
<svg class="a" style="left:44px;top:510px" width="40" height="40" viewBox="0 0 32 32" shape-rendering="crispEdges"><rect x="5" y="0" width="5" height="1" fill="#cd8608"/><rect x="3" y="1" width="2" height="1" fill="#cd8608"/><rect x="5" y="1" width="1" height="1" fill="#fab632"/><rect x="6" y="1" width="1" height="1" fill="#f7c458"/><rect x="7" y="1" width="1" height="1" fill="#fcdc9c"/><rect x="8" y="1" width="2" height="1" fill="#fab632"/><rect x="10" y="1" width="2" height="1" fill="#cd8608"/><rect x="2" y="2" width="1" height="1" fill="#cd8608"/><rect x="3" y="2" width="6" height="1" fill="#f7c458"/><rect x="9" y="2" width="1" height="1" fill="#fab632"/><rect x="10" y="2" width="1" height="1" fill="#e9a51c"/><rect x="11" y="2" width="1" height="1" fill="#fcdc9c"/><rect x="12" y="2" width="1" height="1" fill="#6e4808"/><rect x="1" y="3" width="1" height="1" fill="#cd8608"/><rect x="2" y="3" width="1" height="1" fill="#f7c458"/><rect x="3" y="3" width="1" height="1" fill="#fcdc9c"/><rect x="4" y="3" width="3" height="1" fill="#f7c458"/><rect x="7" y="3" width="1" height="1" fill="#fcdc9c"/><rect x="8" y="3" width="2" height="1" fill="#f7c458"/><rect x="10" y="3" width="3" height="1" fill="#e9a51c"/><rect x="13" y="3" width="1" height="1" fill="#6e4808"/><rect x="0" y="4" width="1" height="1" fill="#6e4808"/><rect x="1" y="4" width="1" height="1" fill="#fab632"/><rect x="2" y="4" width="3" height="1" fill="#f7c458"/><rect x="5" y="4" width="1" height="1" fill="#fcdc9c"/><rect x="6" y="4" width="4" height="1" fill="#f7c458"/><rect x="10" y="4" width="2" height="1" fill="#e9a51c"/><rect x="12" y="4" width="1" height="1" fill="#fab632"/><rect x="13" y="4" width="1" height="1" fill="#6e4808"/><rect x="14" y="4" width="1" height="1" fill="#056a18"/><rect x="0" y="5" width="1" height="1" fill="#6e4808"/><rect x="1" y="5" width="1" height="1" fill="#fab632"/><rect x="2" y="5" width="1" height="1" fill="#fcdc9c"/><rect x="3" y="5" width="6" height="1" fill="#f7c458"/><rect x="9" y="5" width="1" height="1" fill="#fcdc9c"/><rect x="10" y="5" width="2" height="1" fill="#e9a51c"/><rect x="12" y="5" width="1" height="1" fill="#fab632"/><rect x="13" y="5" width="1" height="1" fill="#6e4808"/><rect x="14" y="5" width="1" height="1" fill="#056a18"/><rect x="0" y="6" width="1" height="1" fill="#6e4808"/><rect x="1" y="6" width="6" height="1" fill="#f7c458"/><rect x="7" y="6" width="1" height="1" fill="#fcdc9c"/><rect x="8" y="6" width="2" height="1" fill="#f7c458"/><rect x="10" y="6" width="1" height="1" fill="#fab632"/><rect x="11" y="6" width="2" height="1" fill="#e9a51c"/><rect x="13" y="6" width="1" height="1" fill="#6e4808"/><rect x="14" y="6" width="1" height="1" fill="#056a18"/><rect x="0" y="7" width="1" height="1" fill="#6e4808"/><rect x="1" y="7" width="3" height="1" fill="#f7c458"/><rect x="4" y="7" width="1" height="1" fill="#fcdc9c"/><rect x="5" y="7" width="4" height="1" fill="#f7c458"/><rect x="9" y="7" width="2" height="1" fill="#fab632"/><rect x="11" y="7" width="1" height="1" fill="#e9a51c"/><rect x="12" y="7" width="1" height="1" fill="#42f048"/><rect x="13" y="7" width="1" height="1" fill="#056a18"/><rect x="0" y="8" width="1" height="1" fill="#056a18"/><rect x="1" y="8" width="2" height="1" fill="#6e4808"/><rect x="3" y="8" width="6" height="1" fill="#f7c458"/><rect x="9" y="8" width="1" height="1" fill="#fab632"/><rect x="10" y="8" width="3" height="1" fill="#6e4808"/><rect x="13" y="8" width="1" height="1" fill="#e05028"/><rect x="14" y="8" width="1" height="1" fill="#056a18"/><rect x="0" y="9" width="1" height="1" fill="#056a18"/><rect x="1" y="9" width="1" height="1" fill="#08dc30"/><rect x="2" y="9" width="1" height="1" fill="#42f048"/><rect x="3" y="9" width="7" height="1" fill="#6e4808"/><rect x="10" y="9" width="1" height="1" fill="#e8d000"/><rect x="11" y="9" width="1" height="1" fill="#f8e600"/><rect x="12" y="9" width="1" height="1" fill="#e8d000"/><rect x="13" y="9" width="1" height="1" fill="#e05028"/><rect x="14" y="9" width="1" height="1" fill="#08dc30"/><rect x="15" y="9" width="1" height="1" fill="#056a18"/><rect x="0" y="10" width="1" height="1" fill="#056a18"/><rect x="1" y="10" width="2" height="1" fill="#08dc30"/><rect x="3" y="10" width="1" height="1" fill="#42f048"/><rect x="4" y="10" width="1" height="1" fill="#109828"/><rect x="5" y="10" width="1" height="1" fill="#d8c000"/><rect x="6" y="10" width="2" height="1" fill="#e05028"/><rect x="8" y="10" width="1" height="1" fill="#d8c000"/><rect x="9" y="10" width="2" height="1" fill="#fff2b0"/><rect x="11" y="10" width="1" height="1" fill="#f8e600"/><rect x="12" y="10" width="1" height="1" fill="#c87808"/><rect x="13" y="10" width="1" height="1" fill="#109828"/><rect x="14" y="10" width="1" height="1" fill="#08dc30"/><rect x="15" y="10" width="1" height="1" fill="#056a18"/><rect x="1" y="11" width="2" height="1" fill="#056a18"/><rect x="3" y="11" width="1" height="1" fill="#08dc30"/><rect x="4" y="11" width="1" height="1" fill="#109828"/><rect x="5" y="11" width="2" height="1" fill="#e05028"/><rect x="7" y="11" width="2" height="1" fill="#cc3010"/><rect x="9" y="11" width="1" height="1" fill="#d8c000"/><rect x="10" y="11" width="2" height="1" fill="#fff2b0"/><rect x="12" y="11" width="1" height="1" fill="#c87808"/><rect x="13" y="11" width="1" height="1" fill="#109828"/><rect x="14" y="11" width="1" height="1" fill="#056a18"/><rect x="1" y="12" width="1" height="1" fill="#056a18"/><rect x="2" y="12" width="1" height="1" fill="#cc3010"/><rect x="3" y="12" width="6" height="1" fill="#a84420"/><rect x="9" y="12" width="2" height="1" fill="#42f048"/><rect x="11" y="12" width="1" height="1" fill="#c87808"/><rect x="12" y="12" width="1" height="1" fill="#109828"/><rect x="13" y="12" width="1" height="1" fill="#fab632"/><rect x="14" y="12" width="1" height="1" fill="#6e4808"/><rect x="2" y="13" width="1" height="1" fill="#056a18"/><rect x="3" y="13" width="5" height="1" fill="#08dc30"/><rect x="8" y="13" width="1" height="1" fill="#109828"/><rect x="9" y="13" width="1" height="1" fill="#42f048"/><rect x="10" y="13" width="2" height="1" fill="#109828"/><rect x="12" y="13" width="1" height="1" fill="#fab632"/><rect x="13" y="13" width="1" height="1" fill="#6e4808"/><rect x="3" y="14" width="2" height="1" fill="#6e4808"/><rect x="5" y="14" width="3" height="1" fill="#fab632"/><rect x="8" y="14" width="2" height="1" fill="#f7c458"/><rect x="10" y="14" width="1" height="1" fill="#fab632"/><rect x="11" y="14" width="2" height="1" fill="#6e4808"/><rect x="5" y="15" width="6" height="1" fill="#6e4808"/></svg>
<div class="a" style="left:119px;top:479px;font-size:18px;line-height:18px;letter-spacing:.1px;color:#6a7078">File name:</div>
<div class="a" style="left:232px;top:474px;width:246px;height:27px;box-sizing:border-box;border:1px solid #767676;border-radius:2px;background:#fff"></div>
<div class="a" style="left:237px;top:479.5px;font-size:16px;line-height:16px;letter-spacing:.35px;color:#111">Hamburger-pointer</div>
<div class="a" style="left:480.5px;top:480.5px;font-size:18px;line-height:18px;letter-spacing:.6px;color:#6a7078">.cur</div>
<div class="a" style="left:557px;top:468px;width:156px;height:37px;box-sizing:border-box;border:1px solid #707070;border-radius:3px;background:linear-gradient(#ececec,#e3e3e3)"></div>
<svg class="a" style="left:573px;top:471px" width="28" height="28" viewBox="0 0 28 28">
 <defs><linearGradient id="gf" x1="0" y1="0" x2="1" y2="1"><stop offset="0" stop-color="#a8a8f0"/><stop offset="1" stop-color="#6060c0"/></linearGradient></defs>
 <path d="M2.5 3 Q2.5 2 3.5 2 H23.5 L26 4.5 V25 Q26 26 25 26 H3.5 Q2.5 26 2.5 25 Z" fill="url(#gf)" stroke="#4a4a90" stroke-width=".8"/>
 <rect x="7" y="2.3" width="13" height="8" fill="#3a3a4a"/>
 <rect x="15" y="3.5" width="3" height="5.5" fill="#c8c8d8"/>
 <rect x="6" y="14" width="16" height="11.5" fill="#f0f0f4"/>
 <g stroke="#9090a8" stroke-width=".8"><line x1="8" y1="17" x2="20" y2="17"/><line x1="8" y1="20" x2="20" y2="20"/><line x1="8" y1="23" x2="20" y2="23"/></g>
</svg>
<div class="a" style="left:610px;top:476.5px;font-size:18px;font-weight:bold;line-height:18px;letter-spacing:-.45px;color:#d40000">Download</div>
<svg class="a" style="left:795px;top:458px" width="40" height="60" viewBox="0 0 40 60">
 <defs><radialGradient id="gball" cx=".42" cy=".36" r=".66"><stop offset="0" stop-color="#fff"/><stop offset=".35" stop-color="#f8c8b8"/><stop offset=".8" stop-color="#e86850"/><stop offset="1" stop-color="#c85038"/></radialGradient>
 <radialGradient id="gsh"><stop offset="0" stop-color="#8098a8" stop-opacity=".5"/><stop offset="1" stop-color="#8098a8" stop-opacity="0"/></radialGradient></defs>
 <ellipse cx="22" cy="52" rx="12" ry="4" fill="url(#gsh)"/>
 <circle cx="20" cy="18" r="13.2" fill="url(#gball)"/>
</svg>
<div class="a" style="left:119.5px;top:521.5px;font-size:18px;line-height:18px;letter-spacing:.32px;color:#6a7078;white-space:nowrap">Tip: Click the question mark to learn how to use this tool.</div>
<div class="a" style="left:603.5px;top:521.5px;font-size:18px;line-height:18px;color:#6a7078;white-space:nowrap">-&gt;</div>
</div>
</body></html>
